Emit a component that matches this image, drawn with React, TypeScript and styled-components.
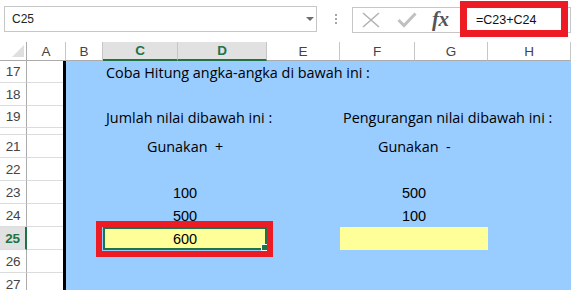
import React from 'react';
import styled, { createGlobalStyle } from 'styled-components';

const GlobalStyle = createGlobalStyle`
  html, body {
    margin: 0;
    padding: 0;
    background: #ffffff;
    overflow: hidden;
  }
`;

const green = '#217346';
const blue = '#99ccff';
const yellow = '#ffff99';
const red = '#ed1c24';
const gridLine = '#dadcdd';
const headerLine = '#c6c6c6';

const Page = styled.div`
  position: relative;
  width: 571px;
  height: 290px;
  overflow: hidden;
  font-family: 'Liberation Sans', Arial, sans-serif;
`;

/* formula bar */
const FormulaBar = styled.div`
  display: flex;
  align-items: flex-start;
  box-sizing: border-box;
  height: 42px;
  padding: 6px 0 0 4px;
`;

const NameBox = styled.div`
  position: relative;
  box-sizing: border-box;
  width: 313px;
  height: 26px;
  border: 1px solid ${headerLine};
  padding-left: 7px;
  display: flex;
  align-items: center;
  font-size: 12px;
  color: #222;
`;

const DropArrow = styled.span`
  position: absolute;
  right: 2px;
  top: 10px;
  width: 0;
  height: 0;
  border-left: 4px solid transparent;
  border-right: 4px solid transparent;
  border-top: 4px solid #6d6d6d;
`;

const Grip = styled.div`
  display: flex;
  flex-direction: column;
  gap: 2px;
  margin: 8px 15px 0 18px;

  span {
    width: 2px;
    height: 2px;
    background: #a6a6a6;
  }
`;

const FxButtons = styled.div`
  box-sizing: border-box;
  width: 108px;
  height: 26px;
  margin-top: 1px;
  border: 1px solid ${headerLine};
  border-right: none;
  display: flex;
  align-items: center;
  padding-left: 9px;
`;

const FxLabel = styled.span`
  font-family: 'Liberation Serif', 'Times New Roman', serif;
  font-style: italic;
  font-weight: bold;
  font-size: 21px;
  color: #555555;
  margin-left: 15px;
  margin-top: -2px;
  letter-spacing: -0.5px;
`;

const FormulaInput = styled.div`
  flex: 1;
  box-sizing: border-box;
  height: 26px;
  margin-top: 1px;
  border: 1px solid ${headerLine};
  padding-left: 15px;
  display: flex;
  align-items: center;
  font-size: 12.5px;
  color: #111;
`;

/* column headers */
const HeaderRow = styled.div`
  display: grid;
  grid-template-columns: 27px 39px 37px 75px 89px 73px 75px 73px 1fr;
  height: 19px;
`;

const Corner = styled.div`
  position: relative;
  border-right: 1px solid #ababab;
  border-bottom: 1px solid #ababab;

  &::after {
    content: '';
    position: absolute;
    right: 2px;
    bottom: 3px;
    width: 0;
    height: 0;
    border-left: 12px solid transparent;
    border-bottom: 12px solid #dfdfdf;
  }
`;

const ColHeader = styled.div<{ $active?: boolean }>`
  display: flex;
  align-items: center;
  justify-content: center;
  box-sizing: border-box;
  font-size: 13.5px;
  background: ${p => (p.$active ? '#e1e1e1' : '#ffffff')};
  color: ${p => (p.$active ? green : '#444444')};
  font-weight: ${p => (p.$active ? 'bold' : 'normal')};
  border-right: 1px solid ${headerLine};
  border-bottom: ${p => (p.$active ? `2px solid ${green}` : '1px solid #ababab')};
`;

/* sheet body */
const SheetBody = styled.div`
  display: grid;
  grid-template-columns: 27px 36px 40px 75px 89px 73px 75px 73px 1fr;
  grid-template-rows: 22px 23px 22px 7px 23px 23px 23px 23px 23px 23px 23px;
`;

const RowNum = styled.div<{ $row: number; $active?: boolean }>`
  grid-column: 1;
  grid-row: ${p => p.$row};
  box-sizing: border-box;
  display: flex;
  align-items: center;
  justify-content: center;
  font-size: 13.5px;
  letter-spacing: -0.3px;
  background: ${p => (p.$active ? '#e1e1e1' : '#ffffff')};
  color: ${p => (p.$active ? green : '#444444')};
  font-weight: ${p => (p.$active ? 'bold' : 'normal')};
  border-right: ${p => (p.$active ? `2px solid ${green}` : '1px solid #ababab')};
  border-bottom: 1px solid ${gridLine};
`;

const EmptyCell = styled.div<{ $row: number }>`
  grid-column: 2;
  grid-row: ${p => p.$row};
  border-bottom: 1px solid ${gridLine};
`;

const BlueFill = styled.div`
  grid-column: 3 / -1;
  grid-row: 1 / -1;
  background: ${blue};
  border-left: 3px solid #000000;
`;

const Cell = styled.div<{
  $row: number;
  $cols: string;
  $align?: 'left' | 'center';
  $indent?: number;
  $fill?: string;
  $number?: boolean;
}>`
  position: relative;
  grid-row: ${p => p.$row};
  grid-column: ${p => p.$cols};
  box-sizing: border-box;
  display: flex;
  align-items: center;
  justify-content: ${p => (p.$align === 'center' ? 'center' : 'flex-start')};
  padding-left: ${p => p.$indent ?? 0}px;
  background: ${p => p.$fill ?? 'transparent'};
  white-space: pre;
  color: #000000;
  font-family: ${p =>
    p.$number
      ? "'Liberation Sans', Arial, sans-serif"
      : "'Open Sans', 'Noto Sans', sans-serif"};
  font-size: ${p => (p.$number ? '14.5px' : '14.4px')};
`;

const SelectedCell = styled(Cell)`
  border: 2px solid ${green};
`;

const FillHandle = styled.span`
  position: absolute;
  right: -3px;
  bottom: -3px;
  width: 5px;
  height: 5px;
  background: ${green};
  border: 1px solid #ffffff;
`;

/* red annotation boxes drawn over the screenshot */
const Annotation = styled.div<{ $x: number; $y: number; $w: number; $h: number; $t: number }>`
  position: absolute;
  left: ${p => p.$x}px;
  top: ${p => p.$y}px;
  width: ${p => p.$w}px;
  height: ${p => p.$h}px;
  box-sizing: border-box;
  border: ${p => p.$t}px solid ${red};
  pointer-events: none;
`;

const columns = ['A', 'B', 'C', 'D', 'E', 'F', 'G', 'H'];
const rows: { num: string; row: number }[] = [
  { num: '17', row: 1 },
  { num: '18', row: 2 },
  { num: '19', row: 3 },
  { num: '', row: 4 },
  { num: '21', row: 5 },
  { num: '22', row: 6 },
  { num: '23', row: 7 },
  { num: '24', row: 8 },
  { num: '25', row: 9 },
  { num: '26', row: 10 },
  { num: '27', row: 11 },
];

const CrossIcon = () => (
  <svg width="18" height="16" viewBox="0 0 18 16">
    <path d="M1 1 L17 15 M17 1 L1 15" stroke="#b3b3b3" strokeWidth="1.6" fill="none" />
  </svg>
);

const CheckIcon = () => (
  <svg width="20" height="16" viewBox="0 0 20 16" style={{ marginLeft: 17 }}>
    <path d="M1.5 8 L7 13.5 L18.5 1.5" stroke="#c0c0c0" strokeWidth="3" fill="none" />
  </svg>
);

export default function App() {
  return (
    <Page>
      <GlobalStyle />
      <FormulaBar>
        <NameBox>
          C25
          <DropArrow />
        </NameBox>
        <Grip>
          <span />
          <span />
          <span />
        </Grip>
        <FxButtons>
          <CrossIcon />
          <CheckIcon />
          <FxLabel>fx</FxLabel>
        </FxButtons>
        <FormulaInput>=C23+C24</FormulaInput>
      </FormulaBar>

      <HeaderRow>
        <Corner />
        {columns.map(c => (
          <ColHeader key={c} $active={c === 'C' || c === 'D'}>
            {c}
          </ColHeader>
        ))}
      </HeaderRow>

      <SheetBody>
        {rows.map(r => (
          <React.Fragment key={r.row}>
            <RowNum $row={r.row} $active={r.num === '25'}>
              {r.num}
            </RowNum>
            <EmptyCell $row={r.row} />
          </React.Fragment>
        ))}
        <BlueFill />

        <Cell $row={1} $cols="4 / -1" $indent={3}>
          Coba Hitung angka-angka di bawah ini :
        </Cell>
        <Cell $row={3} $cols="4 / 7" $indent={3}>
          Jumlah nilai dibawah ini :
        </Cell>
        <Cell $row={3} $cols="7 / -1" $indent={3}>
          Pengurangan nilai dibawah ini :
        </Cell>
        <Cell $row={5} $cols="4 / 7" $indent={44}>
          Gunakan  +
        </Cell>
        <Cell $row={5} $cols="7 / -1" $indent={38}>
          Gunakan  -
        </Cell>

        <Cell $row={7} $cols="4 / 6" $align="center" $number>
          100
        </Cell>
        <Cell $row={7} $cols="7 / 9" $align="center" $number>
          500
        </Cell>
        <Cell $row={8} $cols="4 / 6" $align="center" $number>
          500
        </Cell>
        <Cell $row={8} $cols="7 / 9" $align="center" $number>
          100
        </Cell>
        <SelectedCell $row={9} $cols="4 / 6" $align="center" $number $fill={yellow}>
          600
          <FillHandle />
        </SelectedCell>
        <Cell $row={9} $cols="7 / 9" $fill={yellow} />
      </SheetBody>

      <Annotation $x={460} $y={1} $w={108} $h={36} $t={7} />
      <Annotation $x={96} $y={221} $w={177} $h={36} $t={6} />
    </Page>
  );
}
